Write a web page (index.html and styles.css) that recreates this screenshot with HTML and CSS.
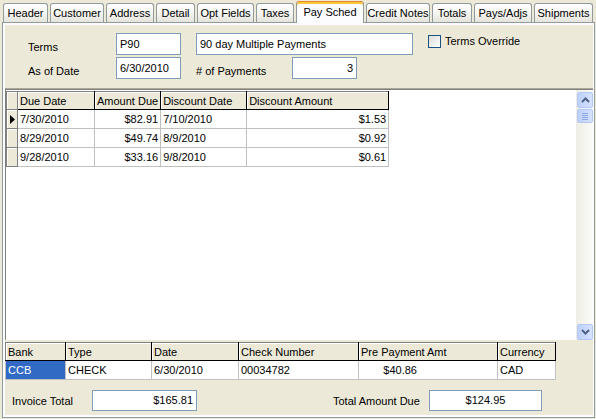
FILE: index.html
```html
<!DOCTYPE html>
<html>
<head>
    <title>Pay Sched</title>
    <link rel="stylesheet" href="styles.css">
</head>
<body>

    <div class="tabs">
        <div class="tab t-header">Header</div>
        <div class="tab t-customer">Customer</div>
        <div class="tab t-address">Address</div>
        <div class="tab t-detail">Detail</div>
        <div class="tab t-opt">Opt Fields</div>
        <div class="tab t-taxes">Taxes</div>
        <div class="tab t-pay active">Pay Sched</div>
        <div class="tab t-credit">Credit Notes</div>
        <div class="tab t-totals">Totals</div>
        <div class="tab t-pays">Pays/Adjs</div>
        <div class="tab t-ship">Shipments</div>
    </div>

    <div class="page">
        <div class="content">

            <div class="top">
                <div class="form">
                    <div class="lbl">Terms</div>
                    <div class="field c2">P90</div>
                    <div class="field desc">90 day Multiple Payments</div>
                    <div class="check"><span class="box"></span>Terms Override</div>

                    <div class="lbl">As of Date</div>
                    <div class="field c2">6/30/2010</div>
                    <div class="lbl c4">&#35; of Payments</div>
                    <div class="field num c5">3</div>
                </div>
            </div>

            <div class="list">
                <table class="grid sched">
                    <thead>
                        <tr>
                            <th class="sel"></th>
                            <th class="w-due">Due Date</th>
                            <th class="w-amt">Amount Due</th>
                            <th class="w-ddate">Discount Date</th>
                            <th class="w-damt">Discount Amount</th>
                        </tr>
                    </thead>
                    <tbody>
                        <tr>
                            <td class="sel"><svg width="5" height="9" viewBox="0 0 5 9"><polygon points="0,0 5,4.5 0,9" fill="#000"/></svg></td>
                            <td>7/30/2010</td>
                            <td class="num">$82.91</td>
                            <td>7/10/2010</td>
                            <td class="num">$1.53</td>
                        </tr>
                        <tr>
                            <td class="sel"></td>
                            <td>8/29/2010</td>
                            <td class="num">$49.74</td>
                            <td>8/9/2010</td>
                            <td class="num">$0.92</td>
                        </tr>
                        <tr>
                            <td class="sel"></td>
                            <td>9/28/2010</td>
                            <td class="num">$33.16</td>
                            <td>9/8/2010</td>
                            <td class="num">$0.61</td>
                        </tr>
                    </tbody>
                </table>

                <div class="vscroll">
                    <div class="sbtn">
                        <svg width="9" height="6" viewBox="0 0 9 6"><polyline points="1,5 4.5,1.5 8,5" fill="none" stroke="#4d6185" stroke-width="2"/></svg>
                    </div>
                    <div class="thumb">
                        <span></span><span></span><span></span><span></span>
                    </div>
                    <div class="track"></div>
                    <div class="sbtn">
                        <svg width="9" height="6" viewBox="0 0 9 6"><polyline points="1,1 4.5,4.5 8,1" fill="none" stroke="#4d6185" stroke-width="2"/></svg>
                    </div>
                </div>
            </div>

            <div class="bottom">
                <table class="grid pays">
                    <thead>
                        <tr>
                            <th class="w-bank">Bank</th>
                            <th class="w-type">Type</th>
                            <th class="w-date">Date</th>
                            <th class="w-check">Check Number</th>
                            <th class="w-pre">Pre Payment Amt</th>
                            <th class="w-cur">Currency</th>
                        </tr>
                    </thead>
                    <tbody>
                        <tr>
                            <td class="picked">CCB</td>
                            <td>CHECK</td>
                            <td>6/30/2010</td>
                            <td>00034782</td>
                            <td class="pre">$40.86</td>
                            <td>CAD</td>
                        </tr>
                    </tbody>
                </table>

                <div class="totals">
                    <div class="tlbl">Invoice Total</div>
                    <div class="field num">$165.81</div>
                    <div></div>
                    <div class="tlbl">Total Amount Due</div>
                    <div class="field mid">$124.95</div>
                </div>
            </div>

        </div>
    </div>

</body>
</html>
```

FILE: styles.css
```css
body {
    margin: 0;
    background: #ece9d8;
    font-family: "Liberation Sans", Arial, sans-serif;
    font-size: 11px;
    color: #000;
}

/* tab strip */

.tabs {
    display: flex;
    align-items: flex-end;
    gap: 2px;
    height: 23px;
    padding-left: 3px;
    margin-bottom: -1px;
    position: relative;
    z-index: 1;
}

.tab {
    box-sizing: border-box;
    height: 19px;
    margin-bottom: 1px;
    border: 1px solid #919b9c;
    border-bottom: none;
    border-radius: 3px 3px 0 0;
    background: linear-gradient(#ffffff, #f4f4f0 55%, #e4e3dc);
    text-align: center;
    line-height: 18px;
    white-space: nowrap;
}

.tab.active {
    height: 22px;
    margin-bottom: 0;
    border-top: 1px solid #e68b2c;
    box-shadow: inset 0 2px 0 #ffc73c;
    background: #fcfcfe;
    line-height: 18px;
    padding-top: 1px;
}

.t-header { width: 45px; }
.t-customer { width: 54px; }
.t-address { width: 48px; }
.t-detail { width: 39px; }
.t-opt { width: 57px; }
.t-taxes { width: 38px; }
.t-pay { width: 68px; }
.t-credit { width: 64px; }
.t-totals { width: 40px; }
.t-pays { width: 58px; }
.t-ship { width: 59px; }

/* page frame */

.page {
    box-sizing: border-box;
    width: 593px;
    height: 396px;
    margin-left: 2px;
    border: 1px solid #919b9c;
    background: #fcfcfe;
    padding: 2px 1px 2px 2px;
}

.content {
    height: 100%;
    display: flex;
    flex-direction: column;
    background: #ece9d8;
}

/* header fields */

.top {
    box-sizing: border-box;
    height: 64px;
    border-bottom: 1px solid #aca899;
}

.form {
    display: grid;
    grid-template-columns: 88px 65px 15px 96px 65px 56px 15px auto;
    grid-template-rows: 22px 22px;
    row-gap: 2px;
    padding: 8px 0 0 23px;
}

.lbl {
    grid-column: 1;
    padding-top: 8px;
    line-height: 13px;
}

.c2 { grid-column: 2; }
.c4 { grid-column: 4; }
.c5 { grid-column: 5; }
.desc { grid-column: 4 / 7; }

.field {
    box-sizing: border-box;
    height: 22px;
    border: 1px solid #7f9db9;
    background: #fff;
    padding: 0 3px;
    line-height: 20px;
    white-space: nowrap;
    overflow: hidden;
}

.field.num { text-align: right; }
.field.mid { text-align: center; }

.check {
    grid-column: 8;
    display: flex;
    align-items: flex-start;
    gap: 4px;
    padding-top: 2px;
    line-height: 13px;
}

.box {
    box-sizing: border-box;
    width: 13px;
    height: 13px;
    border: 1px solid #1c5180;
    background: linear-gradient(135deg, #dcdcd7, #ffffff);
}

/* grids */

.grid {
    border-collapse: collapse;
    table-layout: fixed;
}

.grid th,
.grid td {
    padding: 0 2px;
    text-align: left;
    font-weight: normal;
    white-space: nowrap;
    overflow: hidden;
}

.grid th {
    height: 17px;
    background: #ece9d8;
    border: 1px solid #808080;
    border-right-color: #000;
    border-bottom-color: #000;
    box-shadow: inset 1px 1px #fff;
}

.grid td {
    height: 18px;
    background: #fff;
    border: 1px solid #c0c0c0;
}

.grid td.num { text-align: right; }

.grid .sel {
    width: 7px;
    padding: 0 0 0 3px;
    background: #ece9d8;
    border: 1px solid #808080;
    box-shadow: inset 1px 1px #fff;
}

.grid td.sel svg { display: block; }

.w-due { width: 72px; }
.w-amt { width: 61px; }
.w-ddate { width: 81px; }
.w-damt { width: 137px; }

.list {
    box-sizing: border-box;
    height: 251px;
    display: flex;
    justify-content: space-between;
    background: #fff;
    border-top: 1px solid #808080;
    border-left: 1px solid #808080;
}

.sched { margin-top: 1px; align-self: flex-start; }

/* scroll bar */

.vscroll {
    width: 17px;
    display: flex;
    flex-direction: column;
    gap: 1px;
    padding-top: 2px;
    background: linear-gradient(90deg, #eeede5, #fbfbf8);
}

.sbtn,
.thumb {
    box-sizing: border-box;
    width: 16px;
    height: 16px;
    margin-left: 1px;
    border: 1px solid #b4c8f6;
    border-radius: 2px;
    background: linear-gradient(90deg, #bdd0fb, #d6e2fd);
    display: flex;
    align-items: center;
    justify-content: center;
}

.thumb {
    height: 14px;
    flex-direction: column;
    gap: 1px;
}

.thumb span {
    width: 6px;
    height: 1px;
    background: #8da6e4;
}

.track { flex: 1; }

/* payments */

.bottom {
    flex: 1;
    padding-top: 2px;
}

.pays { width: 551px; }

.w-bank { width: 55px; }
.w-type { width: 81px; }
.w-date { width: 82px; }
.w-check { width: 115px; }
.w-pre { width: 134px; }
.w-cur { width: 53px; }

.grid td.picked {
    background: #316ac5;
    color: #fff;
}

.grid td.pre {
    text-align: right;
    padding-right: 80px;
}

.totals {
    display: grid;
    grid-template-columns: 80px 105px 136px 96px 113px;
    align-items: center;
    margin-top: 10px;
    padding-left: 7px;
}

.totals .field {
    height: 21px;
    line-height: 19px;
}
```
